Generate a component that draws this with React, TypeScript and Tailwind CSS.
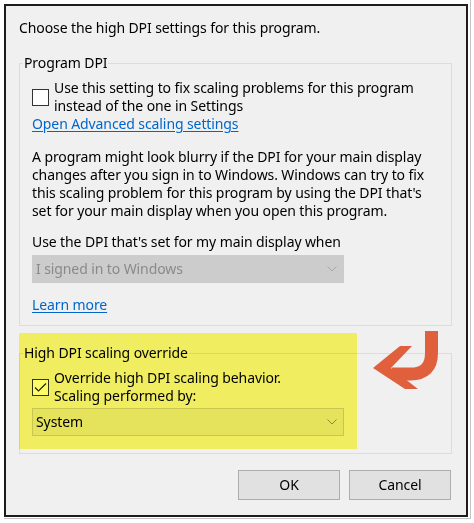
import React from "react";

const font = { fontFamily: '"Segoe UI", "Noto Sans", sans-serif' };

function Chevron({ color }: { color: string }) {
  return (
    <svg width="10" height="6" viewBox="0 0 10 6" className="shrink-0">
      <path d="M0.5 0.5 L5 5 L9.5 0.5" fill="none" stroke={color} strokeWidth="1" />
    </svg>
  );
}

function Checkbox({ checked }: { checked?: boolean }) {
  return (
    <div className="w-[17px] h-[17px] shrink-0 border border-[#333333] bg-white flex items-center justify-center">
      {checked && (
        <svg width="13" height="11" viewBox="0 0 13 11">
          <path d="M1 5.5 L4.5 9 L12 1.5" fill="none" stroke="#222222" strokeWidth="1.2" />
        </svg>
      )}
    </div>
  );
}

function CurvedArrow() {
  return (
    <svg
      width="76"
      height="66"
      viewBox="0 0 76 66"
      className="absolute left-[362px] top-[320px] pointer-events-none"
    >
      <path d="M63.5 5 V27 Q63.5 48 42.5 48 H24" fill="none" stroke="#e0603e" strokeWidth="13" />
      <polygon points="5,42 32,20 44,20 23,42 50,63 37,63" fill="#e0603e" />
    </svg>
  );
}

export default function App() {
  return (
    <div className="w-[474px] h-[523px] bg-white" style={font}>
      <div className="ml-[4px] pt-[4px] w-[467px] h-[519px] border-r border-b border-[#c4c4c4] pr-[2px] pb-[2px]">
        <div className="relative w-[464px] h-[513px] border-2 border-[#1c1c1c] bg-[#f0f0f0] pt-[13px] pl-[13px] pr-[14px] text-[14px] leading-[18px] tracking-[-0.1px] text-black">
          <p>Choose the high DPI settings for this program.</p>

          {/* Program DPI */}
          <fieldset className="min-w-0 mt-[17px] border border-[#dcdcdc] pl-[12px] pr-2 pb-[11px]">
            <legend className="-ml-[9px] px-[1px]">Program DPI</legend>
            <div className="mt-[7px] flex items-center gap-[5px]">
              <Checkbox />
              <div>
                <div>Use this setting to fix scaling problems for this program</div>
                <div>instead of the one in Settings</div>
              </div>
            </div>
            <a className="block text-[#0066cc] underline underline-offset-2">Open Advanced scaling settings</a>
            <p className="mt-[15px] whitespace-nowrap">
              A program might look blurry if the DPI for your main display
              <br />
              changes after you sign in to Windows. Windows can try to fix
              <br />
              this scaling problem for this program by using the DPI that's
              <br />
              set for your main display when you open this program.
            </p>
            <p className="mt-[13px]">Use the DPI that's set for my main display when</p>
            <div className="mt-[4px] w-[312px] h-[28px] bg-[#cccccc] flex items-center justify-between pl-[4px] pr-[7px] text-[#8a8a8a]">
              <span>I signed in to Windows</span>
              <Chevron color="#a8a8a8" />
            </div>
            <a className="mt-[13px] inline-block text-[#0066cc] underline underline-offset-2">Learn more</a>
          </fieldset>

          {/* High DPI scaling override */}
          <fieldset className="min-w-0 mt-[18px] border border-[#dcdcdc] pl-[12px] pr-2 pb-[17px]">
            <legend className="-ml-[9px] px-[1px]">High DPI scaling override</legend>
            <div className="mt-[7px] flex items-center gap-[5px]">
              <Checkbox checked />
              <div>
                <div>Override high DPI scaling behavior.</div>
                <div>Scaling performed by:</div>
              </div>
            </div>
            <div className="mt-[3px] w-[312px] h-[28px] bg-[#e5e5e5] border border-[#c8c8c8] flex items-center justify-between pl-[3px] pr-[6px]">
              <span>System</span>
              <Chevron color="#8a8a8a" />
            </div>
          </fieldset>

          <div className="mt-[16px] flex justify-end gap-[9px] pr-[1px]">
            <button className="w-[102px] h-[30px] bg-[#e1e1e1] border border-[#adadad]">OK</button>
            <button className="w-[102px] h-[30px] bg-[#e1e1e1] border border-[#adadad]">Cancel</button>
          </div>

          {/* highlight annotation */}
          <div className="absolute left-[13px] top-[327px] w-[338px] h-[116px] bg-[#fffd66] mix-blend-multiply pointer-events-none" />
          <CurvedArrow />
        </div>
      </div>
    </div>
  );
}
